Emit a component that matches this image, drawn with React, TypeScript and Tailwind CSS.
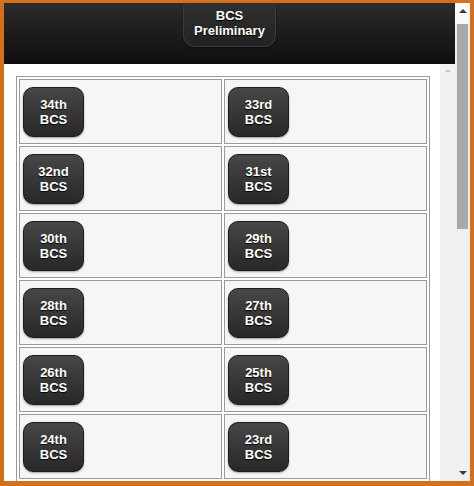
import React from "react";

const items = [
  "34th", "33rd", "32nd", "31st", "30th", "29th", "28th", "27th",
  "26th", "25th", "24th", "23rd",
];

function Btn({ label }: { label: string }) {
  return (
    <div className="w-[61px] h-[50px] rounded-[10px] border border-[#1c1c1c] bg-gradient-to-b from-[#474747] to-[#282828] shadow-[0_1px_2px_rgba(0,0,0,0.35)] flex flex-col items-center justify-center text-white font-bold text-[13px] leading-[15px] [text-shadow:0_1px_1px_#000]">
      <span>{label}</span>
      <span>BCS</span>
    </div>
  );
}

export default function App() {
  const rows: string[][] = [];
  for (let i = 0; i < items.length; i += 2) rows.push([items[i], items[i + 1]]);
  return (
    <div
      className="w-[474px] h-[486px] bg-[#d4701c] pt-[3px] pl-[4px] pr-[4px] pb-[5px] overflow-hidden"
      style={{ fontFamily: '"Liberation Sans", Arial, sans-serif' }}
    >
      <div className="w-full h-full flex">
        <div className="w-[451px] h-full flex flex-col">
          <div className="h-[61px] shrink-0 bg-gradient-to-b from-[#2c2c2c] to-[#0e0e0e] flex justify-center">
            <div className="w-[93px] h-[44px] rounded-b-[12px] rounded-t-[4px] border border-[#3c3c3c] border-t-0 bg-gradient-to-b from-[#303030] to-[#222222] shadow-[0_1px_2px_rgba(0,0,0,0.6)] flex flex-col items-center justify-center text-white font-bold text-[13px] leading-[15px] pb-[4px] [text-shadow:0_1px_1px_#000]">
              <span>BCS</span>
              <span>Preliminary</span>
            </div>
          </div>
          <div className="flex-1 flex bg-white overflow-hidden">
            <div className="w-[436px] pl-[12px] pt-[12px] overflow-hidden">
              <table className="w-[414px] border-separate border-spacing-[2px] border border-[#9a9a9a] bg-white">
                <tbody>
                  {rows.map((r, i) => (
                    <tr key={i}>
                      {r.map((it) => (
                        <td
                          key={it}
                          className="w-[203px] h-[65px] border border-[#9a9a9a] bg-[#f6f6f6] pl-[3px] align-middle"
                        >
                          <Btn label={it} />
                        </td>
                      ))}
                    </tr>
                  ))}
                </tbody>
              </table>
            </div>
            <div className="w-[15px] bg-[#f1f1f1] flex justify-center pt-[5px]">
              <div className="w-0 h-0 border-l-[3px] border-r-[3px] border-b-[3px] border-l-transparent border-r-transparent border-b-[#c8c8c8]" />
            </div>
          </div>
        </div>
        <div className="w-[15px] h-full bg-[#f0f0f0] flex flex-col">
          <div className="h-[21px] bg-[#fafafa] flex justify-center pt-[6px]">
            <div className="w-0 h-0 border-l-[4px] border-r-[4px] border-b-[4px] border-l-transparent border-r-transparent border-b-[#3a3a3a]" />
          </div>
          <div className="h-[205px] mx-[2px] bg-[#a9a9a9]" />
          <div className="flex-1" />
          <div className="h-[14px] flex justify-center pt-[4px]">
            <div className="w-0 h-0 border-l-[4px] border-r-[4px] border-t-[4px] border-l-transparent border-r-transparent border-t-[#3a3a3a]" />
          </div>
        </div>
      </div>
    </div>
  );
}
